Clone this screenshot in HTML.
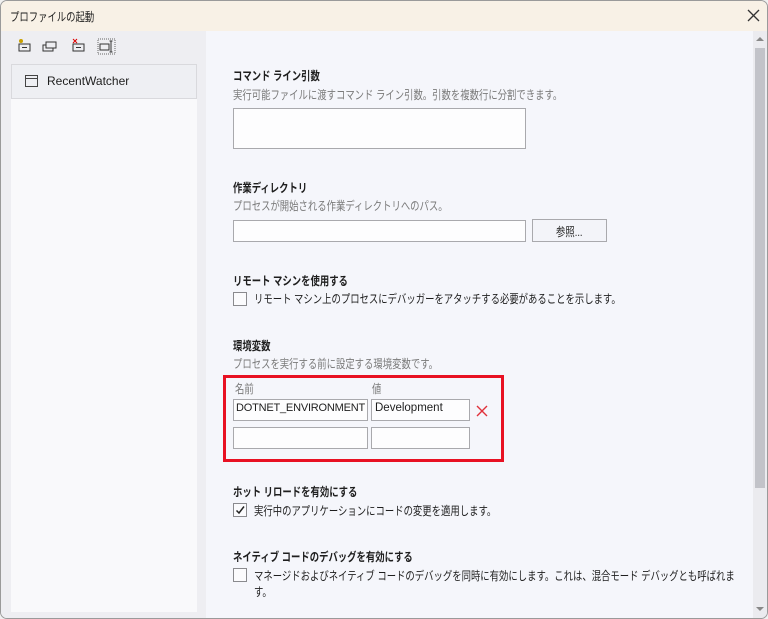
<!DOCTYPE html>
<html><head><meta charset="utf-8"><style>
*{box-sizing:border-box;margin:0;padding:0}
body{width:768px;height:619px;overflow:hidden;background:#f0f0f0;font-family:"Liberation Sans","Noto Sans CJK JP",sans-serif;font-size:12px;color:#1e1e1e;position:relative}
.win{position:absolute;left:0;top:0;width:768px;height:619px;border:1px solid #9a9a9a;border-radius:7px;overflow:hidden;background:#f5f6fb}
.title{position:absolute;left:0;top:0;width:768px;height:30px;background:#f8f1e6;font-size:12px}
.title span{position:absolute;left:9px;top:7px}
.abs{position:absolute}
.left{position:absolute;left:0;top:30px;width:205px;height:589px;background:#eeeef2}
.list{position:absolute;left:10px;top:33px;width:186px;height:548px;background:#f9f9fb}
.item{position:absolute;left:0;top:0;width:186px;height:35px;background:#eeeff3;border:1px solid #d9d9dd}
.h,.d,.t,.j{transform:scaleX(0.78);transform-origin:0 0;white-space:nowrap}
.h{position:absolute;left:232px;font-weight:bold;font-size:12px}
.d{position:absolute;left:232px;color:#7a7a7a;font-size:12px}
.box{position:absolute;background:#fdfdfe;border:1px solid #a9a9ad}
.cb{position:absolute;width:14px;height:14px;border:1px solid #8a8a8e;background:#fbfbfd}
.t{position:absolute;font-size:12px}
</style></head><body><div class="win">
<div class="title"><span class="j" style="display:inline-block">プロファイルの起動</span>
<svg class="abs" style="left:746px;top:8px" width="13" height="13"><path d="M1 1L12 12M12 1L1 12" stroke="#333" stroke-width="1.3"/></svg></div>
<div class="left">
<svg class="abs" style="left:16px;top:7px" width="100" height="18">
<rect x="2" y="6" width="11" height="7" fill="none" stroke="#333"/><line x1="5" y1="9.5" x2="10" y2="9.5" stroke="#333"/><circle cx="4" cy="3" r="2" fill="#c9a000"/>
<rect x="26" y="7" width="10" height="6" fill="none" stroke="#333"/><rect x="29" y="4" width="10" height="6" fill="#eeeef2" stroke="#333"/>
<rect x="56" y="6" width="11" height="7" fill="none" stroke="#333"/><line x1="59" y1="9.5" x2="64" y2="9.5" stroke="#333"/><path d="M56 1L60 5M60 1L56 5" stroke="#d00"/>
<rect x="81" y="1" width="17" height="15" fill="none" stroke="#666" stroke-dasharray="1 1"/><rect x="83" y="6" width="9" height="6" fill="none" stroke="#333"/><path d="M94 3V14M92.5 3H95.5M92.5 14H95.5" stroke="#333"/>
</svg>
<div class="list"><div class="item">
<svg class="abs" style="left:13px;top:10px" width="13" height="12"><rect x=".5" y=".5" width="12" height="11" fill="none" stroke="#444"/><line x1="0" y1="3.5" x2="13" y2="3.5" stroke="#444"/></svg>
<span class="abs" style="left:35px;top:9px">RecentWatcher</span></div></div>
</div>
<div class="abs" style="left:752px;top:30px;width:15px;height:589px;background:#ebebef"></div>
<div class="abs" style="left:754px;top:47px;width:10px;height:440px;background:#c2c3c9"></div>
<svg class="abs" style="left:754px;top:35px" width="10" height="6"><path d="M1 5L5 1L9 5Z" fill="#888"/></svg>
<svg class="abs" style="left:754px;top:605px" width="10" height="6"><path d="M1 1L5 5L9 1Z" fill="#888"/></svg>

<div class="h" style="top:66px">コマンド ライン引数</div>
<div class="d" style="top:85px">実行可能ファイルに渡すコマンド ライン引数。引数を複数行に分割できます。</div>
<div class="box" style="left:232px;top:107px;width:293px;height:41px"></div>
<div class="h" style="top:178px">作業ディレクトリ</div>
<div class="d" style="top:196px">プロセスが開始される作業ディレクトリへのパス。</div>
<div class="box" style="left:232px;top:219px;width:293px;height:22px"></div>
<div class="box" style="left:531px;top:218px;width:75px;height:23px;background:#f3f4f9"><span class="t" style="left:23px;top:3px">参照...</span></div>
<div class="h" style="top:271px">リモート マシンを使用する</div>
<div class="cb" style="left:232px;top:291px"></div>
<div class="t" style="left:253px;top:289px">リモート マシン上のプロセスにデバッガーをアタッチする必要があることを示します。</div>
<div class="h" style="top:336px">環境変数</div>
<div class="d" style="top:354px">プロセスを実行する前に設定する環境変数です。</div>
<div class="abs" style="left:222px;top:374px;width:281px;height:87px;border:3px solid #e81123"></div>
<div class="d" style="left:234px;top:379px">名前</div>
<div class="d" style="left:371px;top:379px">値</div>
<div class="box" style="left:232px;top:398px;width:135px;height:22px;padding:2px 2px;white-space:nowrap;overflow:hidden;font-size:11px;letter-spacing:-0.2px">DOTNET_ENVIRONMENT</div>
<div class="box" style="left:370px;top:398px;width:99px;height:22px;padding:2px 3px;font-size:11.5px">Development</div>
<svg class="abs" style="left:475px;top:404px" width="12" height="12"><path d="M1 1L11 11M11 1L1 11" stroke="#e0303a" stroke-width="1.4"/></svg>
<div class="box" style="left:232px;top:426px;width:135px;height:22px"></div>
<div class="box" style="left:370px;top:426px;width:99px;height:22px"></div>
<div class="h" style="top:482px">ホット リロードを有効にする</div>
<div class="cb" style="left:232px;top:502px"><svg width="12" height="12" style="position:absolute;left:0;top:0"><path d="M2.5 6.5L5 9L10 2.5" fill="none" stroke="#222" stroke-width="1.5"/></svg></div>
<div class="t" style="left:253px;top:501px">実行中のアプリケーションにコードの変更を適用します。</div>
<div class="h" style="top:547px">ネイティブ コードのデバッグを有効にする</div>
<div class="cb" style="left:232px;top:567px"></div>
<div class="t" style="left:253px;top:567px;line-height:16px">マネージドおよびネイティブ コードのデバッグを同時に有効にします。これは、混合モード デバッグとも呼ばれま<br>す。</div>
</div></body></html>
